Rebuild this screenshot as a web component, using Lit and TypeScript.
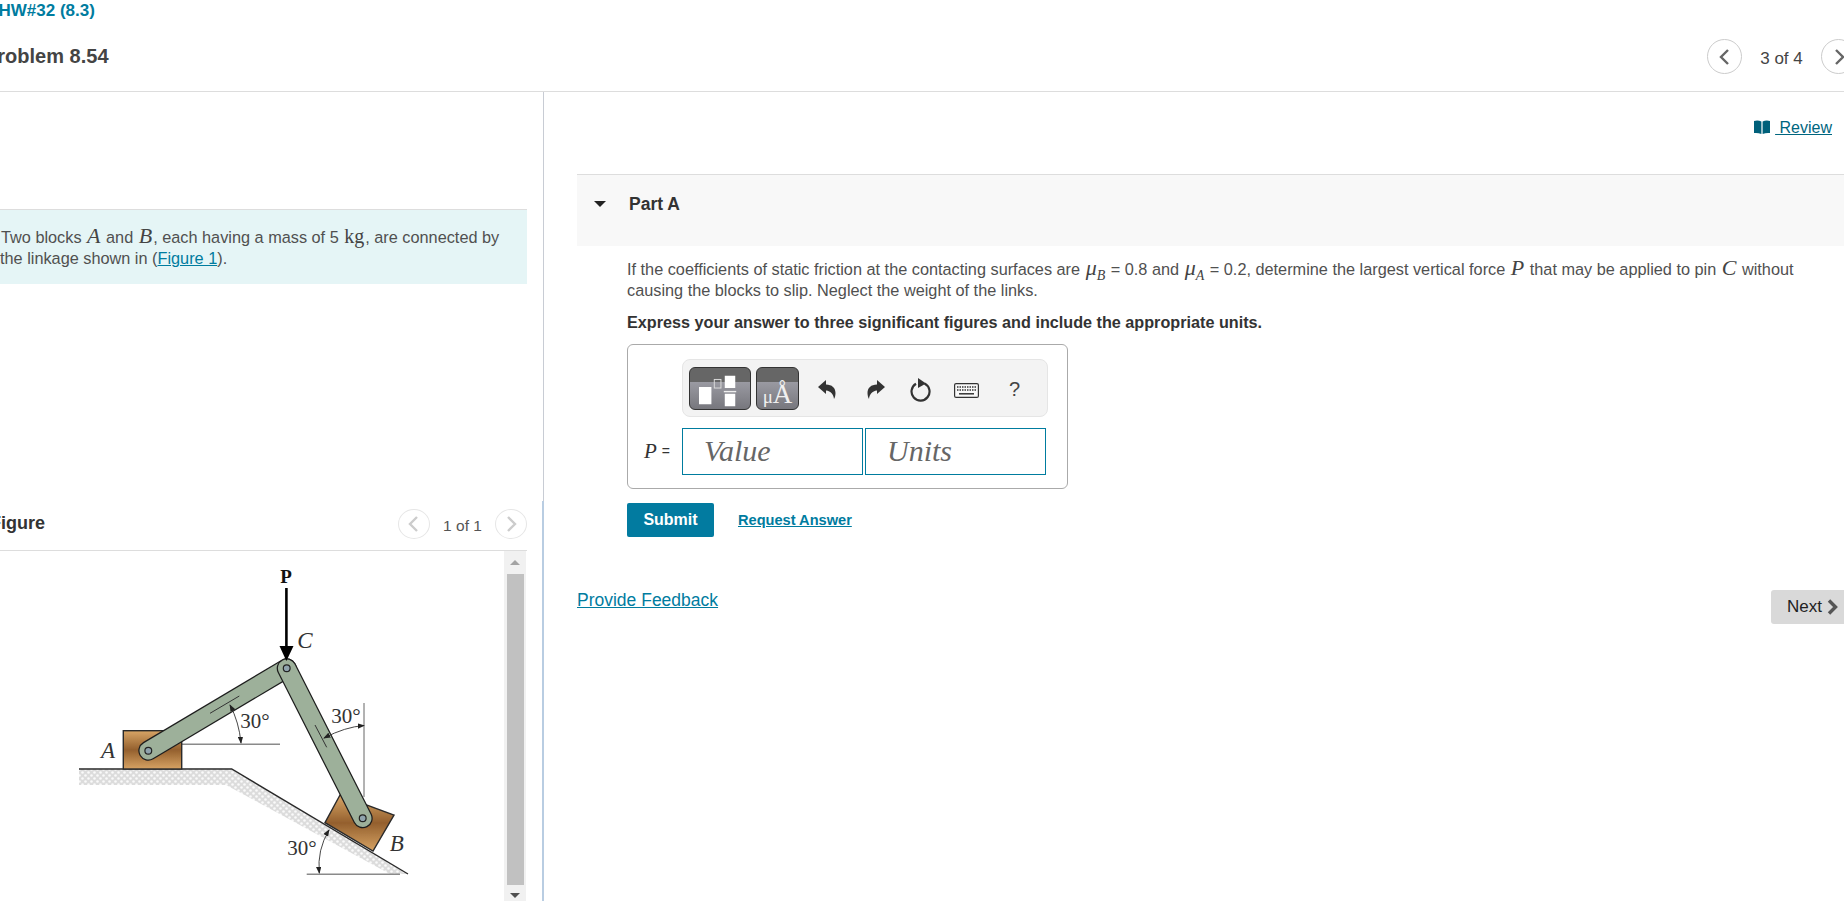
import { LitElement, html, css, svg } from "lit";
import { customElement } from "lit/decorators.js";

const chevron = (dir: "left" | "right") => html`<svg width="14" height="18" viewBox="0 0 14 18">
  <polyline points=${dir === "left" ? "10,2 3,9 10,16" : "4,2 11,9 4,16"} fill="none" stroke="currentColor" stroke-width="2.4"></polyline>
</svg>`;

const figure = svg`
  <defs>
    <linearGradient id="wood" x1="0" y1="0" x2="0" y2="1">
      <stop offset="0" stop-color="#d8a566"></stop>
      <stop offset="0.5" stop-color="#94602e"></stop>
      <stop offset="1" stop-color="#d6a263"></stop>
    </linearGradient>
    <pattern id="gravel" width="6" height="6" patternUnits="userSpaceOnUse">
      <rect width="6" height="6" fill="#dcdcdc"></rect>
      <circle cx="1.5" cy="1.5" r="1.3" fill="#fafafa"></circle>
      <circle cx="4.5" cy="4.5" r="1.3" fill="#fafafa"></circle>
    </pattern>
    <filter id="soft"><feGaussianBlur stdDeviation="0.5"></feGaussianBlur></filter>
    <marker id="tip" markerWidth="8" markerHeight="6" refX="7" refY="3" orient="auto-start-reverse">
      <path d="M0 0L8 3L0 6Z" fill="#222"></path>
    </marker>
  </defs>
  <g filter="url(#soft)">
    <polygon points="79,769 231.7,769 408,874 390,874 226,785 79,785" fill="url(#gravel)"></polygon>
    <path d="M79 769H231.7L408 874" fill="none" stroke="#2a2a2a" stroke-width="1.4"></path>
    <path d="M181.7 744.3H280" stroke="#8a8a8a" stroke-width="1.4"></path>
    <path d="M306.7 874.3H400" stroke="#8a8a8a" stroke-width="1.4"></path>
    <path d="M364 703V797" stroke="#666" stroke-width="1"></path>

    <rect x="123.3" y="730.7" width="58.4" height="38.3" fill="url(#wood)" stroke="#2a2a2a" stroke-width="1.4"></rect>
    <polygon points="325,822.7 340,795 394,815 373,851" fill="url(#wood)" stroke="#2a2a2a" stroke-width="1.4"></polygon>

    <path d="M148.3 750.7L286.7 668.3" stroke="#1f1f1f" stroke-width="20" stroke-linecap="round"></path>
    <path d="M148.3 750.7L286.7 668.3" stroke="#9db09a" stroke-width="17.5" stroke-linecap="round"></path>
    <path d="M286.7 668.3L362.7 818.3" stroke="#1f1f1f" stroke-width="20" stroke-linecap="round"></path>
    <path d="M286.7 668.3L362.7 818.3" stroke="#9db09a" stroke-width="17.5" stroke-linecap="round"></path>
    <circle cx="148.3" cy="750.7" r="3.4" fill="#8fa3ad" stroke="#222" stroke-width="1.2"></circle>
    <circle cx="286.7" cy="668.3" r="3.4" fill="#8fa3ad" stroke="#222" stroke-width="1.2"></circle>
    <circle cx="362.7" cy="818.3" r="3.4" fill="#8fa3ad" stroke="#222" stroke-width="1.2"></circle>

    <path d="M210 713.3L239.3 696" stroke="#333" stroke-width="1"></path>
    <path d="M315 725L326.7 747.3" stroke="#333" stroke-width="1"></path>
    <path d="M230 705Q239 722 241 743" fill="none" stroke="#333" stroke-width="0.9" marker-start="url(#tip)" marker-end="url(#tip)"></path>
    <path d="M324 738Q345 727 364 725.5" fill="none" stroke="#333" stroke-width="0.9" marker-start="url(#tip)" marker-end="url(#tip)"></path>
    <path d="M329 830Q317 850 319.3 873" fill="none" stroke="#333" stroke-width="0.9" marker-start="url(#tip)" marker-end="url(#tip)"></path>

    <path d="M286.4 588V648" stroke="#000" stroke-width="2.6"></path>
    <path d="M279.500 646H293.500L286.400 661Z" fill="#000"></path>
  </g>
  <text class="fig-text" x="255" y="728" text-anchor="middle">30°</text>
  <text class="fig-text" x="346" y="723" text-anchor="middle">30°</text>
  <text class="fig-text" x="302" y="855" text-anchor="middle">30°</text>
  <text class="fig-text ital" x="108" y="758" text-anchor="middle">A</text>
  <text class="fig-text ital" x="396.7" y="851" text-anchor="middle">B</text>
  <text class="fig-text ital" x="305" y="648" text-anchor="middle">C</text>
  <text class="fig-text bold" x="286" y="583" text-anchor="middle">P</text>
`;

@customElement("app-root")
export class AppRoot extends LitElement {
  static styles = css`
    :host {
      display: block;
      width: 1844px;
      height: 901px;
      overflow: hidden;
      background: #fff;
      font-family: "Liberation Sans", Arial, sans-serif;
      color: #505050;
    }

    a {
      color: #007c9f;
      text-decoration: underline;
    }

    .course {
      height: 22px;
      margin-left: -1.5px;
      line-height: 22px;
      font-size: 17px;
      font-weight: 700;
      color: #007c9f;
    }

    .problem-bar {
      height: 70px;
      box-sizing: border-box;
      border-bottom: 1px solid #ddd;
      display: flex;
      align-items: center;
      justify-content: space-between;
      overflow: hidden;
    }

    .problem-bar h1 {
      margin: 0 0 0 -16px;
      font-size: 20px;
      font-weight: 700;
      color: #444;
    }

    .pager {
      display: flex;
      align-items: center;
      margin-right: -12px;
      font-size: 17px;
      color: #444;
    }

    .pager .count {
      width: 79px;
      text-align: center;
      padding-top: 4px;
    }

    .round {
      width: 35px;
      height: 35px;
      box-sizing: border-box;
      border: 1px solid #ccc;
      border-radius: 50%;
      display: flex;
      align-items: center;
      justify-content: center;
      color: #666;
    }

    .main {
      display: grid;
      grid-template-columns: 542px 2px 1fr;
      height: 809px;
    }

    .left {
      padding-right: 15px;
    }

    .intro {
      margin-top: 117px;
      height: 75px;
      box-sizing: border-box;
      background: #e5f5f6;
      border-top: 1px solid #ddd;
      padding: 17px 0 0 1px;
      font-size: 16.3px;
      line-height: 21px;
    }

    .intro .second {
      margin-left: -1px;
    }

    .m {
      font-family: "Liberation Serif", serif;
      font-style: italic;
      font-size: 22px;
      line-height: 0;
      color: #444;
      margin: 0 1px;
    }

    .u {
      font-family: "Liberation Serif", serif;
      font-size: 20px;
      line-height: 0;
      color: #444;
      margin: 0 1px;
    }

    sub {
      font-size: 14px;
      line-height: 0;
    }

    .fig-head {
      margin-top: 213px;
      height: 54px;
      box-sizing: border-box;
      border-bottom: 1px solid #ddd;
      display: flex;
      align-items: center;
      justify-content: space-between;
    }

    .fig-head h2 {
      margin: 0 0 0 -10px;
      font-size: 18px;
      font-weight: 700;
      color: #333;
    }

    .fig-pager {
      display: flex;
      align-items: center;
      font-size: 15.5px;
      color: #555;
    }

    .fig-pager .count {
      width: 65px;
      text-align: center;
      padding-top: 4px;
    }

    .fig-pager .round {
      width: 32px;
      height: 30px;
      border-color: #e6e6e6;
      color: #ccc;
    }

    .fig-body {
      display: flex;
      height: 350px;
    }

    .fig-body svg {
      display: block;
      flex: none;
    }

    .fig-text {
      font-family: "Liberation Serif", serif;
      font-size: 21px;
      fill: #333;
    }

    .ital {
      font-style: italic;
      font-size: 23px;
    }

    .bold {
      font-weight: 700;
      font-size: 19px;
      fill: #111;
    }

    .scrollbar {
      width: 22px;
      margin-left: -1px;
      background: #f1f1f1;
      display: flex;
      flex-direction: column;
      align-items: center;
      justify-content: space-between;
      padding: 9px 0 3px;
      box-sizing: border-box;
    }

    .thumb {
      width: 17px;
      height: 311px;
      background: #c1c1c1;
    }

    .arrow {
      width: 0;
      height: 0;
      border-left: 5px solid transparent;
      border-right: 5px solid transparent;
    }

    .arrow.up {
      border-bottom: 5px solid #a3a3a3;
    }

    .arrow.down {
      border-top: 5px solid #505050;
    }

    .divider {
      display: flex;
      flex-direction: column;
      align-items: flex-end;
    }

    .divider .top {
      width: 1px;
      height: 409px;
      background: #c8ccd4;
    }

    .divider .bottom {
      width: 2px;
      flex: 1;
      background: #b9cde2;
    }

    .right {
      padding-left: 33px;
    }

    .review {
      height: 82px;
      box-sizing: border-box;
      padding: 26px 12px 0 0;
      display: flex;
      justify-content: flex-end;
      font-size: 16px;
      line-height: 20px;
    }

    .review a {
      color: #00667f;
      white-space: pre;
    }

    .review svg {
      margin: 2px 5px 0 0;
    }

    .part {
      height: 72px;
      box-sizing: border-box;
      background: #f8f8f8;
      border-top: 1px solid #ddd;
      padding: 19px 0 0 17px;
      display: flex;
      font-size: 17.5px;
      font-weight: 700;
      line-height: 20px;
      color: #333;
    }

    .tri {
      width: 0;
      height: 0;
      margin: 7px 23px 0 0;
      border-left: 6.5px solid transparent;
      border-right: 6.5px solid transparent;
      border-top: 6.5px solid #222;
    }

    .body {
      padding: 13px 0 0 50px;
      font-size: 16.3px;
      line-height: 21px;
    }

    .body p {
      margin: 0;
    }

    .body .ask {
      margin-top: 11px;
      font-size: 16.2px;
      font-weight: 700;
      color: #333;
    }

    .answer {
      margin-top: 11px;
      width: 441px;
      height: 145px;
      box-sizing: border-box;
      border: 1px solid #aaa;
      border-radius: 6px;
      padding-top: 14px;
      display: grid;
      grid-template-columns: 54px auto;
      grid-template-rows: 58px 47px;
      row-gap: 11px;
      justify-content: start;
    }

    .toolbar {
      grid-column: 2;
      width: 366px;
      box-sizing: border-box;
      background: #f3f3f3;
      border: 1px solid #e5e5e5;
      border-radius: 8px;
      display: flex;
      align-items: center;
      padding-left: 6px;
    }

    .tool {
      height: 43px;
      box-sizing: border-box;
      border: 1px solid #333;
      border-radius: 6px;
      background: linear-gradient(#666 0 34%, #9a9aa2 34%, #77777d 100%);
      display: block;
    }

    .tool.unit {
      width: 43px;
      margin-left: 5px;
      color: #f0f0f0;
      font-family: "Liberation Serif", serif;
      text-align: center;
      padding-top: 11px;
      line-height: 30px;
      font-size: 27px;
      white-space: nowrap;
      overflow: hidden;
    }

    .tool.unit small {
      font-size: 19px;
    }

    .icon {
      flex: none;
      display: block;
      margin-top: 3px;
      color: #333;
    }

    .icon.keys {
      margin-top: 5px;
    }

    .help {
      font-size: 20px;
      color: #444;
      margin: 3px 0 0 30px;
    }

    .eq {
      display: flex;
      align-items: center;
      justify-content: flex-end;
      padding-right: 12px;
      font-size: 14px;
      color: #333;
      gap: 5px;
    }

    .eq i {
      font-family: "Liberation Serif", serif;
      font-size: 21px;
    }

    .inputs {
      display: flex;
      gap: 2px;
    }

    .field {
      width: 181px;
      box-sizing: border-box;
      border: 1px solid #007c9f;
      padding-left: 21px;
      font-family: "Liberation Serif", serif;
      font-style: italic;
      font-size: 30px;
      line-height: 43px;
      color: #666;
    }

    .actions {
      margin-top: 14px;
      display: flex;
      align-items: center;
      gap: 24px;
    }

    .submit {
      width: 87px;
      height: 34px;
      background: #027ba0;
      border-radius: 2px;
      color: #fff;
      font-size: 16px;
      font-weight: 700;
      line-height: 33px;
      text-align: center;
    }

    .request {
      font-size: 14.6px;
      font-weight: 700;
    }

    .foot {
      margin-top: 53px;
      display: flex;
      justify-content: space-between;
      align-items: flex-start;
    }

    .foot a {
      font-size: 17.5px;
      line-height: 20px;
    }

    .next {
      width: 73px;
      height: 34px;
      box-sizing: border-box;
      background: #d9d9d9;
      border-radius: 3px 0 0 3px;
      padding-left: 16px;
      display: flex;
      align-items: center;
      gap: 5px;
      font-size: 17px;
      color: #222;
    }
  `;

  render() {
    return html`
      <div class="course">HW#32 (8.3)</div>
      <div class="problem-bar">
        <h1>Problem 8.54</h1>
        <div class="pager">
          <span class="round">${chevron("left")}</span>
          <span class="count">3 of 4</span>
          <span class="round">${chevron("right")}</span>
        </div>
      </div>
      <div class="main">
        <div class="left">
          <div class="intro">
            Two blocks <i class="m">A</i> and <i class="m">B</i>, each having a mass of 5 <span class="u">kg</span>, are connected by<br />
            <span class="second">the linkage shown in (<a href="#">Figure 1</a>).</span>
          </div>
          <div class="fig-head">
            <h2>Figure</h2>
            <div class="fig-pager">
              <span class="round">${chevron("left")}</span>
              <span class="count">1 of 1</span>
              <span class="round">${chevron("right")}</span>
            </div>
          </div>
          <div class="fig-body">
            <svg width="505" height="350" viewBox="0 551 505 350">${figure}</svg>
            <div class="scrollbar">
              <div class="arrow up"></div>
              <div class="thumb"></div>
              <div class="arrow down"></div>
            </div>
          </div>
        </div>
        <div class="divider">
          <div class="top"></div>
          <div class="bottom"></div>
        </div>
        <div class="right">
          <div class="review">
            <svg width="16" height="14" viewBox="0 0 16 14">
              <path d="M0 1Q4 0 7.400 1.500V14Q4 12.500 0 13ZM8.600 1.500Q12 0 16 1V13Q12 12.500 8.600 14Z" fill="#00607a"></path>
            </svg>
            <a href="#"> Review</a>
          </div>
          <div class="part"><div class="tri"></div>Part A</div>
          <div class="body">
            <p>
              If the coefficients of static friction at the contacting surfaces are <i class="m">μ<sub>B</sub></i> = 0.8 and
              <i class="m">μ<sub>A</sub></i> = 0.2, determine the largest vertical force <i class="m">P</i> that may be applied to pin
              <i class="m">C</i> without<br />causing the blocks to slip. Neglect the weight of the links.
            </p>
            <p class="ask">Express your answer to three significant figures and include the appropriate units.</p>
            <div class="answer">
              <div class="toolbar">
                <svg class="tool" width="62" height="43" viewBox="0 0 62 43">
                  <path d="M9 20H22V38H9ZM36 8H47V21H36ZM36 27H47V40H36Z" fill="#fff"></path>
                  <rect x="25" y="12" width="7" height="9" fill="none" stroke="#ddd" stroke-width="1"></rect>
                  <rect x="35" y="24" width="13" height="1.5" fill="#eee"></rect>
                </svg>
                <div class="tool unit"><small>μ</small>Å</div>
                <svg class="icon" style="margin-left:19px" width="18" height="21" viewBox="0 0 18 21">
                  <path d="M0 8L8 1V5.5C14 5.5 17.500 9 17.500 14C17.500 16 17 18.500 16 20C15.500 15.500 13 12 8 11.500V15Z" fill="currentColor"></path>
                </svg>
                <svg class="icon" style="margin-left:31px" width="18" height="21" viewBox="0 0 18 21">
                  <path d="M18 8L10 1V5.5C4 5.5 .5 9 .5 14C.5 16 1 18.500 2 20C2.500 15.500 5 12 10 11.500V15Z" fill="currentColor"></path>
                </svg>
                <svg class="icon" style="margin-left:25px" width="22" height="24" viewBox="0 0 22 24">
                  <path d="M14.500 5.500A9 9 0 1 1 6 5.800" fill="none" stroke="currentColor" stroke-width="2.200"></path>
                  <path d="M8 0L16 5.500L8 10Z" fill="currentColor"></path>
                </svg>
                <svg class="icon keys" style="margin-left:22px" width="25" height="15" viewBox="0 0 25 15">
                  <rect x=".6" y=".6" width="23.800" height="13.800" rx="1.500" fill="#f8f8f8" stroke="currentColor" stroke-width="1.200"></rect>
                  <path d="M3 4H22M3 7H22" stroke="currentColor" stroke-width="1.500" stroke-dasharray="1.500 1"></path>
                  <path d="M5 10.800H20" stroke="currentColor" stroke-width="1.500"></path>
                </svg>
                <span class="help">?</span>
              </div>
              <div class="eq"><i>P</i><span>=</span></div>
              <div class="inputs">
                <div class="field">Value</div>
                <div class="field">Units</div>
              </div>
            </div>
            <div class="actions">
              <div class="submit">Submit</div>
              <a class="request" href="#">Request Answer</a>
            </div>
          </div>
          <div class="foot">
            <a href="#">Provide Feedback</a>
            <div class="next">
              Next
              <svg width="11" height="16" viewBox="0 0 11 16">
                <polyline points="2,1.500 8.500,8 2,14.500" fill="none" stroke="#555" stroke-width="3.400"></polyline>
              </svg>
            </div>
          </div>
        </div>
      </div>
    `;
  }
}
